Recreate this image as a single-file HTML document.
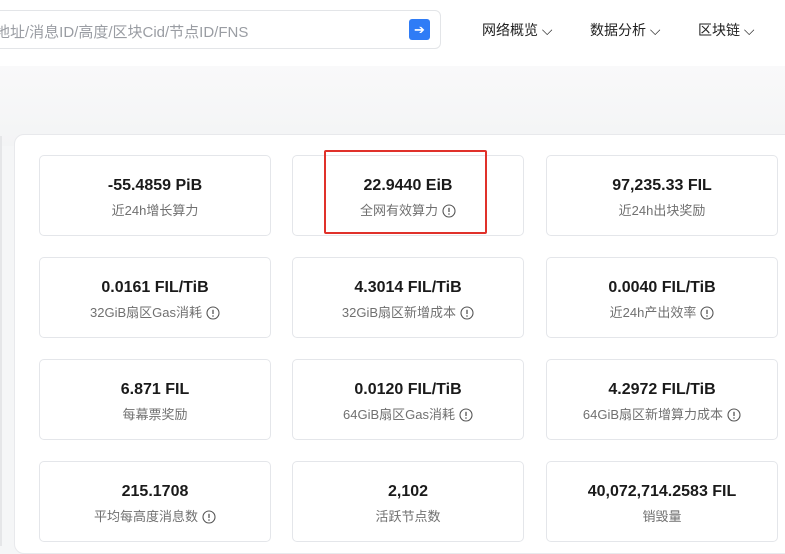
<!DOCTYPE html>
<html><head><meta charset="utf-8"><style>
*{margin:0;padding:0;box-sizing:border-box}
body{width:785px;height:543px;overflow:hidden;background:#f5f6f7;font-family:"Liberation Sans","Noto Sans CJK SC",sans-serif;position:relative}
.top{position:absolute;left:0;top:0;width:785px;height:66px;background:#fff}
.search{position:absolute;left:-10px;top:10px;width:451px;height:39px;border:1px solid #e3e5e8;border-radius:6px;background:#fff}
.search span{position:absolute;left:4px;top:10px;font-size:15px;color:#9a9da3}
.btn{position:absolute;left:409px;top:19px;width:21px;height:21px;background:#2f7cf6;border-radius:3px;color:#fff;font-size:13px;text-align:center;line-height:21px}
.nav{position:absolute;top:20px;font-size:14px;color:#222}
.grad{position:absolute;left:0;top:66px;width:785px;height:80px;background:linear-gradient(#f9f9fa,#f3f4f5)}
.panel{position:absolute;left:14px;top:134px;width:800px;height:420px;background:#fff;border:1px solid #e8e9ec;border-radius:10px}
.edge{position:absolute;left:0;top:136px;width:2px;height:410px;background:#e5e6e8}
.card{position:absolute;width:232px;height:81px;border:1px solid #e4e6ea;border-radius:5px;background:#fff;text-align:center}
.card b{display:block;margin-top:21px;font-size:16px;color:#1a1a1a;line-height:18px}
.card p{margin-top:8px;font-size:13px;color:#707070;line-height:16px;display:flex;justify-content:center;align-items:center}
.card p svg{margin-left:4px}
.red{position:absolute;left:324px;top:150px;width:163px;height:84px;border:2px solid #e0312a;border-radius:2px}
</style></head><body>
<div class="top">
<div class="search"><span>地址/消息ID/高度/区块Cid/节点ID/FNS</span></div>
<div class="btn">➔</div>
<div class="nav" style="left:482px">网络概览 ⌵</div>
<div class="nav" style="left:590px">数据分析 ⌵</div>
<div class="nav" style="left:698px">区块链 ⌵</div>
</div>
<div class="grad"></div>
<div class="edge"></div>
<div class="panel"></div>
<svg width="0" height="0" style="position:absolute"><defs><g id="ic"><circle cx="7" cy="7" r="6" fill="none" stroke="#555" stroke-width="1.1"/><path d="M7 3.8V8" stroke="#555" stroke-width="1.3"/><circle cx="7" cy="10" r="0.8" fill="#555"/></g></defs></svg>
<div class="card" style="left:39px;top:155px"><b>-55.4859 PiB</b><p>近24h增长算力</p></div>
<div class="card" style="left:292px;top:155px"><b>22.9440 EiB</b><p>全网有效算力<svg width="14" height="14"><use href="#ic"/></svg></p></div>
<div class="card" style="left:546px;top:155px"><b>97,235.33 FIL</b><p>近24h出块奖励</p></div>
<div class="card" style="left:39px;top:257px"><b>0.0161 FIL/TiB</b><p>32GiB扇区Gas消耗<svg width="14" height="14"><use href="#ic"/></svg></p></div>
<div class="card" style="left:292px;top:257px"><b>4.3014 FIL/TiB</b><p>32GiB扇区新增成本<svg width="14" height="14"><use href="#ic"/></svg></p></div>
<div class="card" style="left:546px;top:257px"><b>0.0040 FIL/TiB</b><p>近24h产出效率<svg width="14" height="14"><use href="#ic"/></svg></p></div>
<div class="card" style="left:39px;top:359px"><b>6.871 FIL</b><p>每幕票奖励</p></div>
<div class="card" style="left:292px;top:359px"><b>0.0120 FIL/TiB</b><p>64GiB扇区Gas消耗<svg width="14" height="14"><use href="#ic"/></svg></p></div>
<div class="card" style="left:546px;top:359px"><b>4.2972 FIL/TiB</b><p>64GiB扇区新增算力成本<svg width="14" height="14"><use href="#ic"/></svg></p></div>
<div class="card" style="left:39px;top:461px"><b>215.1708</b><p>平均每高度消息数<svg width="14" height="14"><use href="#ic"/></svg></p></div>
<div class="card" style="left:292px;top:461px"><b>2,102</b><p>活跃节点数</p></div>
<div class="card" style="left:546px;top:461px"><b>40,072,714.2583 FIL</b><p>销毁量</p></div>
<div class="red"></div>
</body></html>
